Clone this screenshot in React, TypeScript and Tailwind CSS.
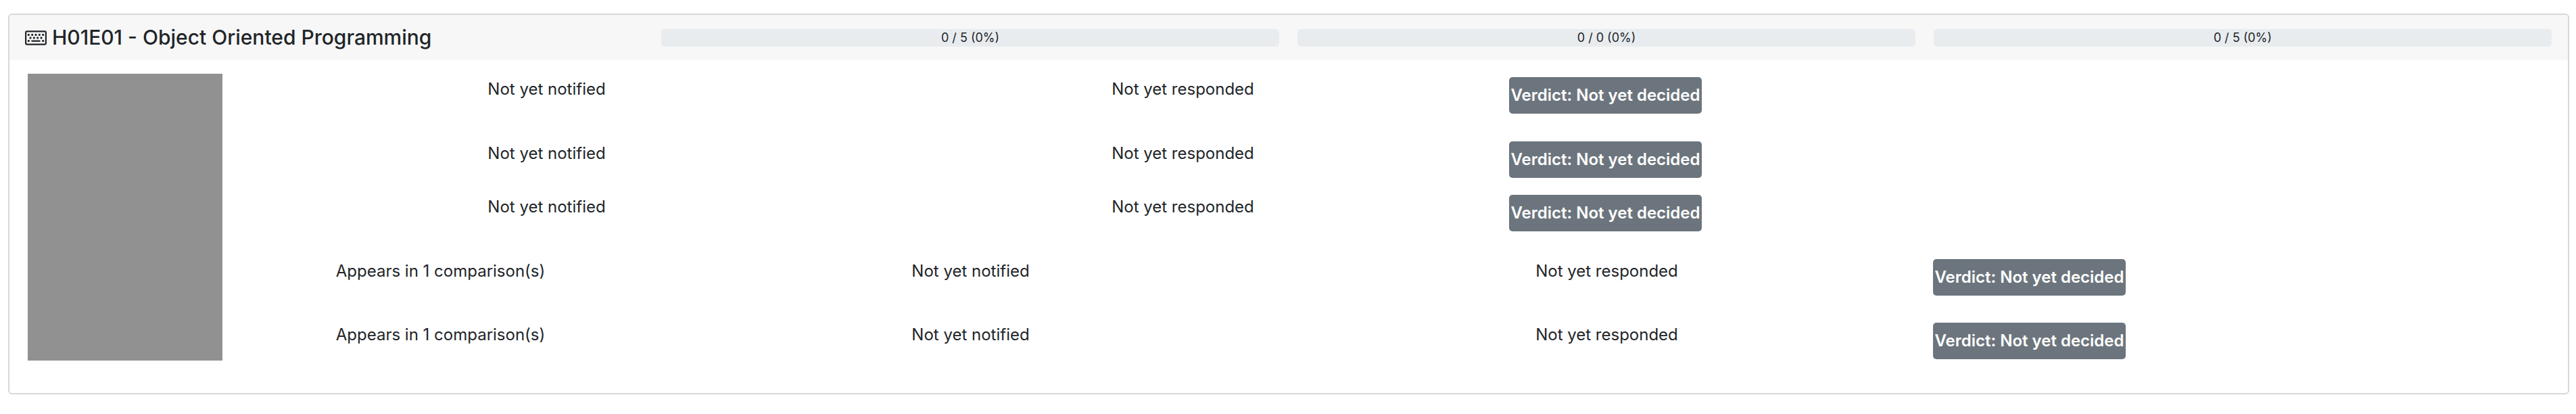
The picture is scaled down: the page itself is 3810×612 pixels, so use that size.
import { FaRegKeyboard } from "react-icons/fa"

const bars = ["0 / 5 (0%)", "0 / 0 (0%)", "0 / 5 (0%)"]

function Verdict() {
  return (
    <span className="flex h-[54px] w-[285px] items-center justify-center rounded-[5px] bg-[#6c757d] text-[24px] font-semibold text-white">
      Verdict: Not yet decided
    </span>
  )
}

function Status({ label }: { label: string }) {
  return <div className="w-[941px] pt-[1px] text-center leading-[34px]">{label}</div>
}

function ThreeColRow({ className }: { className: string }) {
  return (
    <div className={`flex ${className}`}>
      <Status label="Not yet notified" />
      <Status label="Not yet responded" />
      <div className="pl-3">
        <Verdict />
      </div>
    </div>
  )
}

function ComparisonRow({ className }: { className: string }) {
  return (
    <div className={`flex ${className}`}>
      <div className="w-[627px] pt-[1px] text-center leading-[34px]">Appears in 1 comparison(s)</div>
      <Status label="Not yet notified" />
      <Status label="Not yet responded" />
      <div className="pl-3">
        <Verdict />
      </div>
    </div>
  )
}

export default function App() {
  return (
    <div className="h-[612px] bg-white px-[12px] pt-[20px] font-['Inter','Liberation_Sans',sans-serif] text-[24px] text-[#212529]">
      <div className="h-[563px] w-[3788px] overflow-hidden rounded-[6px] border-2 border-[#d8d8d8]">
        {/* Header */}
        <div className="flex h-[67px] items-center bg-[#f7f7f7] pl-[23px] pr-[24px]">
          <div className="flex w-[942px] items-center gap-[8px] text-[30px] font-medium">
            <FaRegKeyboard className="h-[32px] w-[32px]" />
            <span>H01E01 - Object Oriented Programming</span>
          </div>
          <div className="flex gap-[27px]">
            {bars.map((label, i) => (
              <div
                key={i}
                className="flex h-[26px] w-[914px] items-center justify-center rounded-[5px] bg-[#e9ecef] text-[18px]"
              >
                {label}
              </div>
            ))}
          </div>
        </div>

        {/* Body */}
        <div className="flex pl-[27px] pt-[20px]">
          <div className="h-[424px] w-[288px] shrink-0 bg-[#919191] blur-[0.6px]" />
          <div className="pl-[9px] pt-[5px]">
            <ThreeColRow className="mb-[41px]" />
            <ThreeColRow className="mb-[25px]" />
            <ThreeColRow className="mb-[41px]" />
            <ComparisonRow className="mb-[40px]" />
            <ComparisonRow className="" />
          </div>
        </div>
      </div>
    </div>
  )
}
